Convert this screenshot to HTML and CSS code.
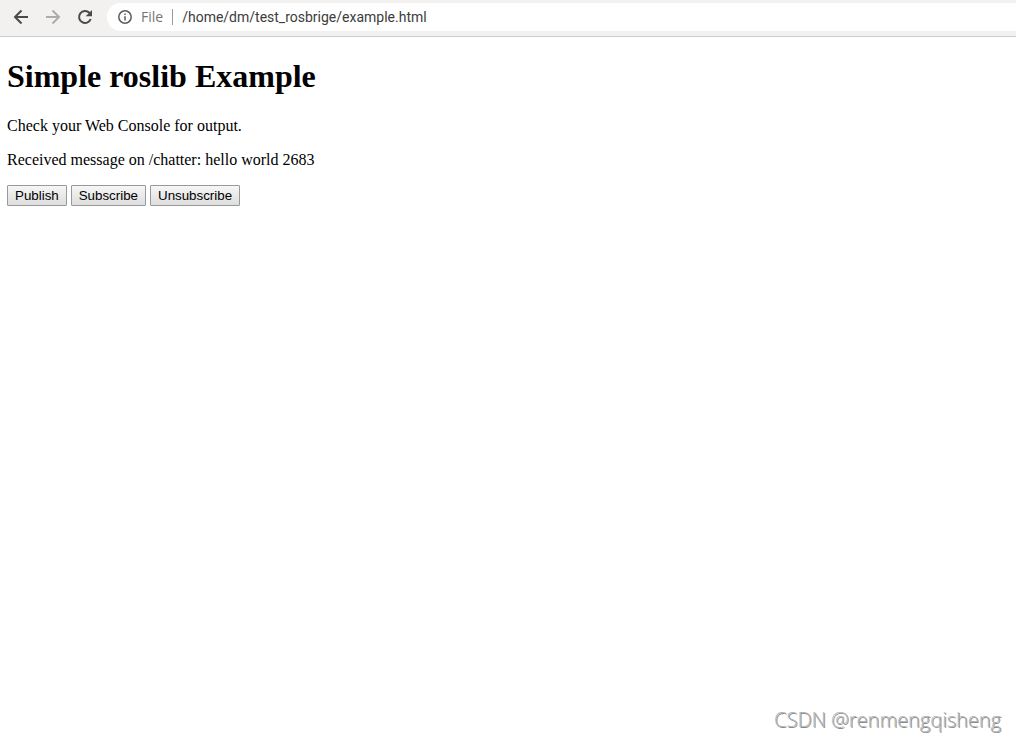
FILE: index.html
```html
<!DOCTYPE html>
<html lang="en">
<head>
<meta charset="utf-8">
<title>Simple roslib Example</title>
<link rel="stylesheet" href="styles.css">
</head>
<body>
<header class="toolbar">
  <nav class="nav">
    <button class="nav-button" type="button" aria-label="Back">
      <svg class="icon" viewBox="0 0 16 16"><path d="M15 8H2.500M8.500 1.500L2 8l6.500 6.500"/></svg>
    </button>
    <button class="nav-button nav-button-off" type="button" aria-label="Forward" disabled>
      <svg class="icon" viewBox="0 0 16 16"><path d="M1 8h12.500M7.500 1.500L14 8l-6.500 6.500"/></svg>
    </button>
    <button class="nav-button" type="button" aria-label="Reload">
      <svg class="icon" viewBox="0 0 16 16"><path d="M13.700 10A6 6 0 1 1 12.400 3.800L13.500 5"/><path class="solid" d="M15 1v6.300H8.700z"/></svg>
    </button>
  </nav>
  <div class="address">
    <svg class="info" viewBox="0 0 14 14"><circle cx="7" cy="7" r="6.200"/><path d="M7 6.200v4.200M7 3.500v1.500"/></svg>
    <label class="scheme" for="url">File</label>
    <input class="url" id="url" type="text" value="/home/dm/test_rosbrige/example.html">
  </div>
</header>
<main class="page">
  <h1 class="title">Simple roslib Example</h1>
  <p class="text">Check your Web Console for output.</p>
  <p class="text">Received message on /chatter: hello world 2683</p>
  <div class="actions">
    <button class="action" type="button">Publish</button>
    <button class="action" type="button">Subscribe</button>
    <button class="action" type="button">Unsubscribe</button>
  </div>
</main>
<footer class="watermark">CSDN @renmengqisheng</footer>
</body>
</html>
```
FILE: styles.css
```css
* { box-sizing: border-box; }
body {
  margin: 0;
  min-height: 100vh;
  display: flex;
  flex-direction: column;
  background: #fff;
  color: #000;
  font-family: "Liberation Serif", serif;
  font-size: 16px;
}
.toolbar {
  display: flex;
  padding: 3px 0 5px 13px;
  background: #f2f1f0;
  border-bottom: 1px solid #cdcccb;
}
.nav {
  display: flex;
  align-items: center;
  gap: 16px;
}
.nav-button {
  display: flex;
  padding: 0;
  border: 0;
  background: none;
  color: #4a4a4a;
}
.nav-button-off { color: #adacab; }
.icon {
  width: 16px;
  height: 16px;
  fill: none;
  stroke: currentColor;
  stroke-width: 2;
}
.solid { fill: currentColor; stroke: none; }
.address {
  flex: 1;
  display: flex;
  align-items: center;
  height: 28px;
  margin-left: 14px;
  padding-left: 11px;
  background: #fff;
  border-radius: 14px 0 0 14px;
  font-family: "Open Sans", "Noto Sans", sans-serif;
  font-size: 14px;
}
.info {
  width: 14px;
  height: 14px;
  fill: none;
  stroke: #5c5c5c;
  stroke-width: 1.500;
}
.scheme {
  margin-left: 9px;
  padding-right: 9px;
  border-right: 1px solid #9a9a9a;
  line-height: 16px;
  color: #757575;
}
.url {
  flex: 1;
  min-width: 0;
  margin-left: 9px;
  padding: 0;
  border: 0;
  outline: 0;
  background: none;
  color: #3c3c3c;
  font-family: Roboto, sans-serif;
  font-size: 14px;
}
.page { flex: 1; padding: 21px 7px; }
.title {
  margin: 0 0 22px;
  font-size: 32px;
  line-height: 37px;
}
.text { margin: 0 0 16px; line-height: 18px; }
.actions { display: flex; flex-wrap: wrap; gap: 4px; }
.action {
  padding: 2px 7px;
  border: 1px solid #999;
  border-radius: 1px;
  background: linear-gradient(#f6f6f6, #dddddd);
  color: #000;
  font-family: "Liberation Sans", sans-serif;
  line-height: 15px;
}
.watermark {
  padding: 0 15px 7px;
  color: #b4b4b4;
  text-align: right;
  text-shadow: 1px 1px 0 #8c8c8c;
  font-family: "Open Sans", "Noto Sans", sans-serif;
  font-size: 20px;
  font-weight: 300;
  line-height: 28px;
}
```
